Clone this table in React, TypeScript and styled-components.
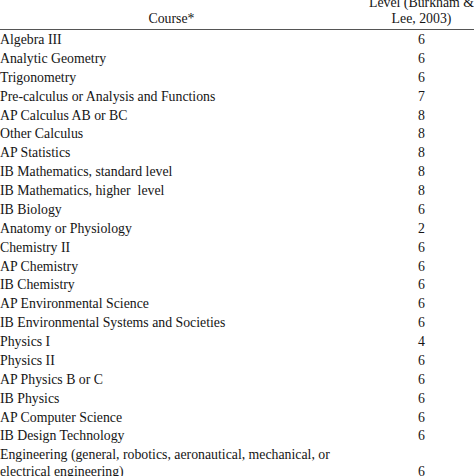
import styled, { createGlobalStyle } from 'styled-components'

const GlobalStyle = createGlobalStyle`
  html, body {
    margin: 0;
    padding: 0;
    background: #ffffff;
    overflow: hidden;
  }
  body {
    font-family: "Liberation Serif", "Times New Roman", serif;
    font-size: 13.8px;
    color: #151515;
  }
`

const Table = styled.div`
  width: 500px;
  display: flex;
  flex-direction: column;
  margin-top: -5px;
`

const HeaderRow = styled.div`
  display: grid;
  grid-template-columns: 343px 157px;
  border-bottom: 1px solid #555;
  padding-bottom: 2px;
`

const HeadCell = styled.div`
  align-self: end;
  text-align: center;
  line-height: 16px;
  white-space: nowrap;
`

const Rows = styled.div`
  display: grid;
  grid-template-columns: 343px 157px;
  padding-top: 1px;
`

const CourseCell = styled.div<{ $wrapped?: boolean }>`
  line-height: ${(p) => (p.$wrapped ? '17px' : '18.87px')};
  white-space: pre;
`

const LevelCell = styled.div<{ $wrapped?: boolean }>`
  align-self: end;
  text-align: center;
  line-height: ${(p) => (p.$wrapped ? '17px' : '18.87px')};
`

const rows: [string, string][] = [
  ['Algebra III', '6'],
  ['Analytic Geometry', '6'],
  ['Trigonometry', '6'],
  ['Pre-calculus or Analysis and Functions', '7'],
  ['AP Calculus AB or BC', '8'],
  ['Other Calculus', '8'],
  ['AP Statistics', '8'],
  ['IB Mathematics, standard level', '8'],
  ['IB Mathematics, higher  level', '8'],
  ['IB Biology', '6'],
  ['Anatomy or Physiology', '2'],
  ['Chemistry II', '6'],
  ['AP Chemistry', '6'],
  ['IB Chemistry', '6'],
  ['AP Environmental Science', '6'],
  ['IB Environmental Systems and Societies', '6'],
  ['Physics I', '4'],
  ['Physics II', '6'],
  ['AP Physics B or C', '6'],
  ['IB Physics', '6'],
  ['AP Computer Science', '6'],
  ['IB Design Technology', '6'],
  ['Engineering (general, robotics, aeronautical, mechanical, or\nelectrical engineering)', '6'],
]

export default function App() {
  return (
    <>
      <GlobalStyle />
      <Table>
        <HeaderRow>
          <HeadCell>Course*</HeadCell>
          <HeadCell>
            Level (Burkham &amp;
            <br />
            Lee, 2003)
          </HeadCell>
        </HeaderRow>
        <Rows>
          {rows.map(([course, level]) => {
            const wrapped = course.includes('\n')
            return [
              <CourseCell key={course} $wrapped={wrapped}>
                {course}
              </CourseCell>,
              <LevelCell key={course + '-level'} $wrapped={wrapped}>
                {level}
              </LevelCell>,
            ]
          })}
        </Rows>
      </Table>
    </>
  )
}
